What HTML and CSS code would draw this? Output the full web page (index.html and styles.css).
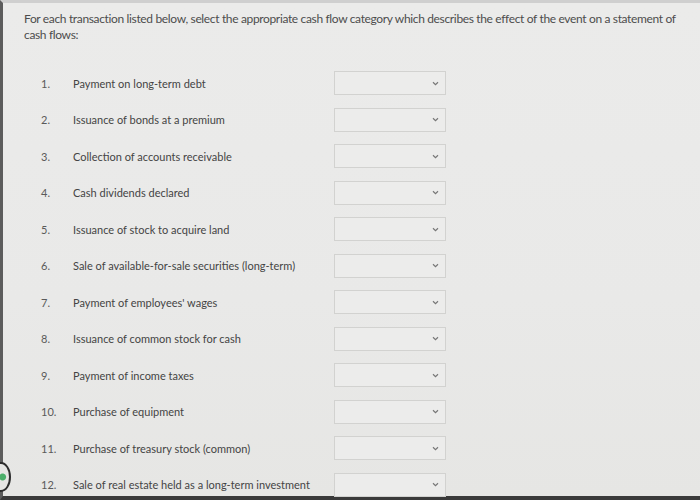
FILE: index.html
```html
<!DOCTYPE html>
<html>
<head>
<meta charset="utf-8">
<link rel="stylesheet" href="styles.css">
</head>
<body>
<div class="screen">
  <p class="intro">For each transaction listed below, select the appropriate cash flow category which describes the effect of the event on a statement of cash flows:</p>
  <ol class="items">
    <li class="row"><span class="num">1.</span><span class="label">Payment on long-term debt</span><span class="select"><svg viewBox="0 0 8 6" class="chev"><path d="M1 1.5 L4 4.5 L7 1.5"/></svg></span></li>
    <li class="row"><span class="num">2.</span><span class="label">Issuance of bonds at a premium</span><span class="select"><svg viewBox="0 0 8 6" class="chev"><path d="M1 1.5 L4 4.5 L7 1.5"/></svg></span></li>
    <li class="row"><span class="num">3.</span><span class="label">Collection of accounts receivable</span><span class="select"><svg viewBox="0 0 8 6" class="chev"><path d="M1 1.5 L4 4.5 L7 1.5"/></svg></span></li>
    <li class="row"><span class="num">4.</span><span class="label">Cash dividends declared</span><span class="select"><svg viewBox="0 0 8 6" class="chev"><path d="M1 1.5 L4 4.5 L7 1.5"/></svg></span></li>
    <li class="row"><span class="num">5.</span><span class="label">Issuance of stock to acquire land</span><span class="select"><svg viewBox="0 0 8 6" class="chev"><path d="M1 1.5 L4 4.5 L7 1.5"/></svg></span></li>
    <li class="row"><span class="num">6.</span><span class="label">Sale of available-for-sale securities (long-term)</span><span class="select"><svg viewBox="0 0 8 6" class="chev"><path d="M1 1.5 L4 4.5 L7 1.5"/></svg></span></li>
    <li class="row"><span class="num">7.</span><span class="label">Payment of employees' wages</span><span class="select"><svg viewBox="0 0 8 6" class="chev"><path d="M1 1.5 L4 4.5 L7 1.5"/></svg></span></li>
    <li class="row"><span class="num">8.</span><span class="label">Issuance of common stock for cash</span><span class="select"><svg viewBox="0 0 8 6" class="chev"><path d="M1 1.5 L4 4.5 L7 1.5"/></svg></span></li>
    <li class="row"><span class="num">9.</span><span class="label">Payment of income taxes</span><span class="select"><svg viewBox="0 0 8 6" class="chev"><path d="M1 1.5 L4 4.5 L7 1.5"/></svg></span></li>
    <li class="row"><span class="num">10.</span><span class="label">Purchase of equipment</span><span class="select"><svg viewBox="0 0 8 6" class="chev"><path d="M1 1.5 L4 4.5 L7 1.5"/></svg></span></li>
    <li class="row"><span class="num">11.</span><span class="label">Purchase of treasury stock (common)</span><span class="select"><svg viewBox="0 0 8 6" class="chev"><path d="M1 1.5 L4 4.5 L7 1.5"/></svg></span></li>
    <li class="row"><span class="num">12.</span><span class="label">Sale of real estate held as a long-term investment</span><span class="select"><svg viewBox="0 0 8 6" class="chev"><path d="M1 1.5 L4 4.5 L7 1.5"/></svg></span></li>
  </ol>
  <div class="badge"></div>
</div>
</body>
</html>
```

FILE: styles.css
```css
html, body {
  margin: 0;
  padding: 0;
  width: 700px;
  height: 500px;
  overflow: hidden;
  background: #e8e8e6;
}
.screen {
  position: relative;
  box-sizing: border-box;
  width: 700px;
  height: 500px;
  background: linear-gradient(180deg, #ebebea 0%, #e9e9e8 60%, #e6e6e4 100%);
  border-left: 3px solid #5c5c5c;
  border-top: 3px solid #cfcfcf;
  border-bottom: 4px solid #3a3a3a;
  font-family: Lato, "Open Sans", sans-serif;
  color: #4a4a4a;
  padding: 8px 0 0 21px;
}
.intro {
  margin: 0;
  font-size: 12px;
  line-height: 16px;
  letter-spacing: -0.35px;
  width: 670px;
  color: #4d4d4d;
}
.items {
  list-style: none;
  margin: 22px 0 0 0;
  padding: 0;
}
.row {
  display: flex;
  align-items: center;
  height: 36.5px;
  font-size: 11px;
}
.num {
  width: 32px;
  padding-left: 17px;
  color: #5a5a5a;
}
.label {
  width: 261px;
  color: #444;
}
.select {
  box-sizing: border-box;
  width: 112px;
  height: 24px;
  border: 1px solid #d2d2d0;
  background: #ececeb;
  display: flex;
  align-items: center;
  justify-content: flex-end;
  padding-right: 6px;
}
.chev {
  width: 7px;
  height: 5px;
  fill: none;
  stroke: #777;
  stroke-width: 1.4;
}
.badge {
  position: absolute;
  left: -12px;
  bottom: 4px;
  width: 16px;
  height: 26px;
  border: 2px solid #2d2d2d;
  border-radius: 50%;
  background: radial-gradient(circle at 60% 50%, #4caf6a 0 3px, #e6e6e4 4px);
}
```
